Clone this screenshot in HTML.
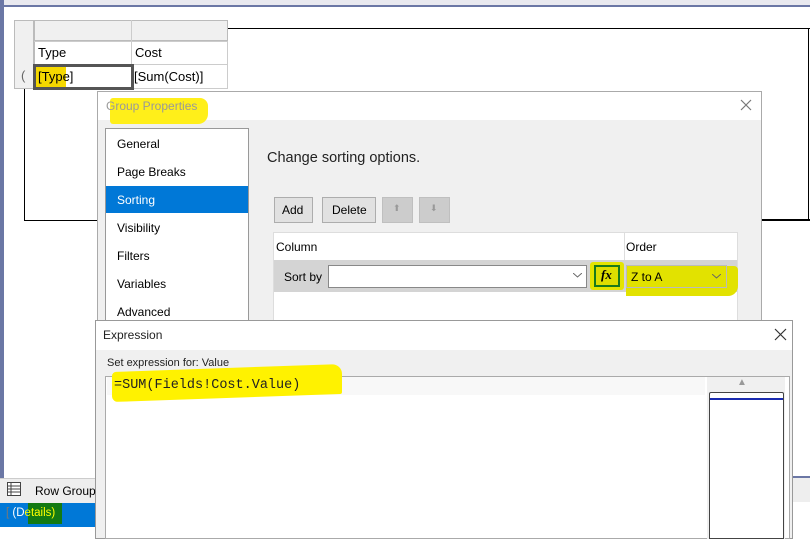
<!DOCTYPE html><html><head><style>
*{margin:0;padding:0;box-sizing:border-box}
body{width:810px;height:539px;overflow:hidden;position:relative;background:#fff;font-family:"Liberation Sans",sans-serif;font-size:12px;color:#000}
.a{position:absolute}
.t{position:absolute;white-space:nowrap}
</style></head><body>
<div class="a" style="left:0;top:0;width:810px;height:5px;background:#e9e9ef"></div>
<div class="a" style="left:0;top:5px;width:810px;height:2px;background:#6b77a5"></div>
<div class="a" style="left:0;top:0;width:4px;height:478px;background:#6b77a5"></div>
<div class="a" style="left:228px;top:28px;width:582px;height:1px;background:#000"></div>
<div class="a" style="left:808px;top:28px;width:1px;height:192px;background:#000"></div>
<div class="a" style="left:24px;top:88px;width:1px;height:133px;background:#000"></div>
<div class="a" style="left:24px;top:220px;width:74px;height:1px;background:#000"></div>
<div class="a" style="left:762px;top:219px;width:48px;height:2px;background:#000"></div>
<div class="a" style="left:14px;top:20px;width:214px;height:21px;background:#f0f0f0;border:1px solid #bbb"></div>
<div class="a" style="left:14px;top:20px;width:20px;height:69px;background:#f0f0f0;border:1px solid #bbb"></div>
<div class="a" style="left:34px;top:20px;width:1px;height:69px;background:#bbb"></div>
<div class="a" style="left:131px;top:20px;width:1px;height:69px;background:#ccc"></div>
<div class="a" style="left:34px;top:41px;width:194px;height:48px;border:1px solid #ccc;border-left:none"></div>
<div class="a" style="left:34px;top:64px;width:194px;height:1px;background:#ccc"></div>
<div class="t" style="left:38px;top:45px;font-size:13px">Type</div>
<div class="t" style="left:135px;top:45px;font-size:13px">Cost</div>
<div class="t" style="left:21px;top:68px;font-size:13px;color:#666">(</div>
<div class="a" style="left:36px;top:66px;width:30px;height:22px;background:#f5d800"></div>
<div class="a" style="left:33px;top:64px;width:101px;height:26px;border:3px solid #555"></div>
<div class="t" style="left:38px;top:69px;font-size:13px">[Type]</div>
<div class="t" style="left:134px;top:69px;font-size:13px">[Sum(Cost)]</div>
<div class="a" style="left:97px;top:91px;width:665px;height:240px;background:#f0f0f0;border:1px solid #aaa"></div>
<div class="a" style="left:98px;top:92px;width:663px;height:28px;background:#fff"></div>
<div class="a" style="left:110px;top:98px;width:98px;height:26px;background:#ffef1a;border-radius:3px 8px 10px 3px"></div>
<div class="t" style="left:106px;top:99px;font-size:12px;color:#999">Group Properties</div>
<svg class="a" style="left:740px;top:99px" width="12" height="12"><path d="M1 1L11 11M11 1L1 11" stroke="#777" stroke-width="1.2"/></svg>
<div class="a" style="left:105px;top:128px;width:144px;height:200px;background:#fff;border:1px solid #999"></div>
<div class="a" style="left:106px;top:186px;width:142px;height:27px;background:#0078d7"></div>
<div class="t" style="left:117px;top:137px">General</div>
<div class="t" style="left:117px;top:165px">Page Breaks</div>
<div class="t" style="left:117px;top:193px;color:#fff">Sorting</div>
<div class="t" style="left:117px;top:221px">Visibility</div>
<div class="t" style="left:117px;top:249px">Filters</div>
<div class="t" style="left:117px;top:277px">Variables</div>
<div class="t" style="left:117px;top:305px">Advanced</div>
<div class="t" style="left:267px;top:150px;font-size:14.5px;color:#222">Change sorting options.</div>
<div class="a" style="left:274px;top:197px;width:39px;height:26px;background:#e1e1e1;border:1px solid #adadad"></div>
<div class="t" style="left:282px;top:203px">Add</div>
<div class="a" style="left:322px;top:197px;width:54px;height:26px;background:#e1e1e1;border:1px solid #adadad"></div>
<div class="t" style="left:332px;top:203px">Delete</div>
<div class="a" style="left:382px;top:197px;width:31px;height:26px;background:#ccc;border:1px solid #bfbfbf"></div>
<div class="t" style="left:393px;top:203px;font-size:9px;color:#999">⬆</div>
<div class="a" style="left:419px;top:197px;width:31px;height:26px;background:#ccc;border:1px solid #bfbfbf"></div>
<div class="t" style="left:430px;top:203px;font-size:9px;color:#999">⬇</div>
<div class="a" style="left:273px;top:232px;width:465px;height:99px;background:#fff;border:1px solid #ddd"></div>
<div class="a" style="left:624px;top:232px;width:1px;height:28px;background:#ddd"></div>
<div class="t" style="left:276px;top:240px">Column</div>
<div class="t" style="left:626px;top:240px">Order</div>
<div class="a" style="left:274px;top:260px;width:463px;height:32px;background:#d4d4d4"></div>
<div class="t" style="left:284px;top:270px">Sort by</div>
<div class="a" style="left:328px;top:265px;width:259px;height:23px;background:#fff;border:1px solid #888"></div>
<svg class="a" style="left:573px;top:273px" width="9" height="5"><path d="M0 0L4.5 4L9 0" fill="none" stroke="#666"/></svg>
<div class="a" style="left:590px;top:262px;width:34px;height:28px;background:#e4e400;border-radius:3px"></div>
<div class="a" style="left:594px;top:265px;width:26px;height:22px;background:#dede00;border:2px solid #1a7a1a"></div>
<div class="t" style="left:601px;top:267px;font-family:'Liberation Serif',serif;font-style:italic;font-weight:bold;font-size:13px">fx</div>
<div class="a" style="left:626px;top:266px;width:112px;height:30px;background:#e2e200;border-radius:0 4px 10px 0"></div>
<div class="a" style="left:626px;top:265px;width:101px;height:23px;border:1px solid #bbb"></div>
<div class="t" style="left:631px;top:270px">Z to A</div>
<svg class="a" style="left:712px;top:274px" width="9" height="5"><path d="M0 0L4.5 4L9 0" fill="none" stroke="#666"/></svg>
<div class="a" style="left:95px;top:320px;width:698px;height:219px;background:#f0f0f0;border:1px solid #999"></div>
<div class="a" style="left:96px;top:321px;width:696px;height:29px;background:#fff"></div>
<div class="t" style="left:103px;top:328px;font-size:12px;color:#222">Expression</div>
<svg class="a" style="left:774px;top:328px" width="13" height="13"><path d="M1 1L12 12M12 1L1 12" stroke="#333" stroke-width="1.2"/></svg>
<div class="t" style="left:107px;top:357px;font-size:11px;color:#222">Set expression for: Value</div>
<div class="a" style="left:105px;top:376px;width:685px;height:163px;background:#fff;border:1px solid #aaa"></div>
<div class="a" style="left:107px;top:377px;width:598px;height:18px;background:#f8f8f8"></div>
<div class="a" style="left:112px;top:368px;width:230px;height:30px;background:#fff200;border-radius:4px 10px 2px 6px;transform:skewY(-2deg)"></div>
<div class="t" style="left:114px;top:378px;font-family:'Liberation Mono',monospace;font-size:13.5px;color:#222">=SUM(Fields!Cost.Value)</div>
<div class="a" style="left:707px;top:377px;width:78px;height:162px;background:#f0f0f0"></div>
<div class="t" style="left:737px;top:377px;font-size:10px;color:#999">▲</div>
<div class="a" style="left:709px;top:392px;width:75px;height:147px;background:#fff;border:1px solid #444;border-radius:2px 2px 0 0"></div>
<div class="a" style="left:710px;top:398px;width:73px;height:2px;background:#1a2bb0"></div>
<div class="a" style="left:0;top:478px;width:95px;height:25px;background:#eeeeee;border-top:1px solid #ccc"></div>
<div class="a" style="left:793px;top:476px;width:17px;height:26px;background:#eee;border-top:2px solid #6b77a5"></div>
<svg class="a" style="left:7px;top:482px" width="14" height="14"><rect x="0.5" y="0.5" width="13" height="13" fill="#fff" stroke="#444"/><path d="M1 4H13M1 7H13M1 10H13M4 1V13" stroke="#444"/></svg>
<div class="t" style="left:35px;top:484px">Row Group</div>
<div class="a" style="left:0;top:503px;width:95px;height:24px;background:#0078d7"></div>
<div class="a" style="left:28px;top:503px;width:34px;height:21px;background:#137a13"></div>
<div class="t" style="left:6px;top:507px;color:#fff;font-size:11.5px"><span style="color:#777">[</span> (D<span style="color:#ff0">etails)</span></div>
</body></html>
